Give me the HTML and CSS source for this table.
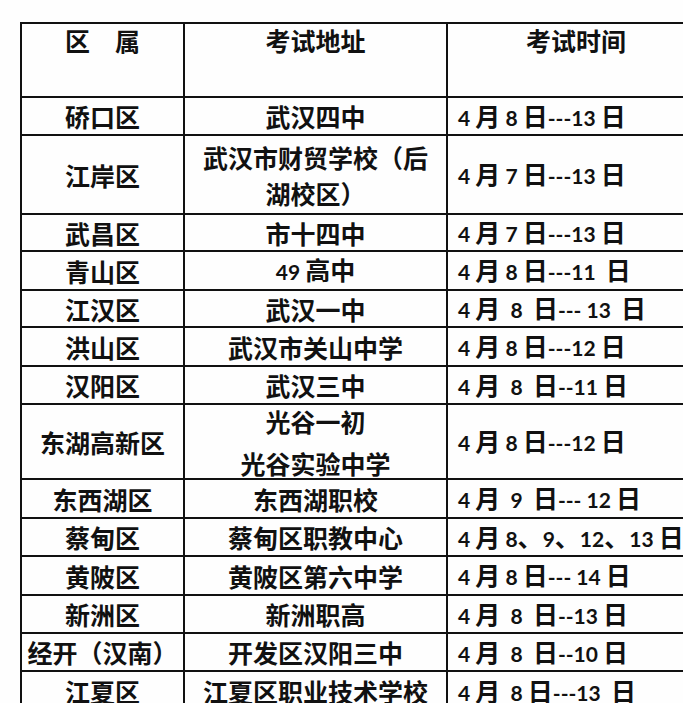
FILE: index.html
```html
<!DOCTYPE html>
<html lang="zh">
<head>
<meta charset="utf-8">
<link rel="stylesheet" href="styles.css">
</head>
<body>
<table class="sched">
  <colgroup><col class="c1"><col class="c2"><col class="c3"></colgroup>
  <tr class="head r74">
    <th>区　属</th>
    <th>考试地址</th>
    <th>考试时间</th>
  </tr>
  <tr class="r38"><td>硚口区</td><td>武汉四中</td><td class="dt">4 <i>月</i> 8 <i>日</i>---13 <i>日</i></td></tr>
  <tr class="r79"><td>江岸区</td><td class="two">武汉市财贸学校（后<br>湖校区）</td><td class="dt">4 <i>月</i> 7 <i>日</i>---13 <i>日</i></td></tr>
  <tr class="r37"><td>武昌区</td><td>市十四中</td><td class="dt">4 <i>月</i> 7 <i>日</i>---13 <i>日</i></td></tr>
  <tr class="r39"><td>青山区</td><td><span class="num">49 </span>高中</td><td class="dt">4 <i>月</i> 8 <i>日</i>---11  <i>日</i></td></tr>
  <tr class="r37"><td>江汉区</td><td>武汉一中</td><td class="dt">4 <i>月</i>  8  <i>日</i>--- 13  <i>日</i></td></tr>
  <tr class="r39"><td>洪山区</td><td>武汉市关山中学</td><td class="dt">4 <i>月</i> 8 <i>日</i>---12 <i>日</i></td></tr>
  <tr class="r38"><td>汉阳区</td><td>武汉三中</td><td class="dt">4 <i>月</i>  8  <i>日</i>--11 <i>日</i></td></tr>
  <tr class="r75"><td>东湖高新区</td><td><span class="pair"><span>光谷一初</span><span>光谷实验中学</span></span></td><td class="dt">4 <i>月</i> 8 <i>日</i>---12 <i>日</i></td></tr>
  <tr class="r39"><td>东西湖区</td><td>东西湖职校</td><td class="dt">4 <i>月</i>  9  <i>日</i>--- 12 <i>日</i></td></tr>
  <tr class="r38"><td>蔡甸区</td><td>蔡甸区职教中心</td><td class="dt">4 <i>月</i> 8<i>、</i>9<i>、</i>12<i>、</i>13 <i>日</i></td></tr>
  <tr class="r39"><td>黄陂区</td><td>黄陂区第六中学</td><td class="dt">4 <i>月</i> 8 <i>日</i>--- 14 <i>日</i></td></tr>
  <tr class="r38"><td>新洲区</td><td>新洲职高</td><td class="dt">4 <i>月</i>  8  <i>日</i>--13 <i>日</i></td></tr>
  <tr class="r38"><td>经开（汉南）</td><td>开发区汉阳三中</td><td class="dt">4 <i>月</i>  8  <i>日</i>--10 <i>日</i></td></tr>
  <tr class="r40"><td>江夏区</td><td>江夏区职业技术学校</td><td class="dt">4 <i>月</i>  8 <i>日</i>---13  <i>日</i></td></tr>
</table>
</body>
</html>
```

FILE: styles.css
```css
html, body {
  margin: 0;
  padding: 0;
  background: #fefefe;
  overflow: hidden;
  width: 683px;
  height: 703px;
}

.sched {
  margin: 22px 0 0 20px;
  border-collapse: collapse;
  table-layout: fixed;
  width: 684px;
  font-family: "Noto Sans CJK SC", "Noto Sans", sans-serif;
  font-weight: 700;
  font-size: 25px;
  color: #111;
}

.c1 { width: 163px; }
.c2 { width: 263px; }
.c3 { width: 258px; }

.sched th,
.sched td {
  border: 2px solid #111;
  padding: 0;
  text-align: center;
  vertical-align: middle;
  line-height: 30px;
  white-space: nowrap;
}

.sched th {
  vertical-align: top;
  padding-top: 1px;
  font-weight: 700;
}

.num {
  font-family: Lato, "Noto Sans CJK SC", sans-serif;
  font-size: 21px;
}

.sched td.dt {
  text-align: left;
  padding-left: 10px;
  white-space: pre;
  font-family: Lato, "Noto Sans CJK SC", sans-serif;
  font-size: 21px;
}

.dt i {
  font-style: normal;
  font-family: "Noto Sans CJK SC", sans-serif;
  font-size: 25px;
}

.sched td.two { line-height: 36px; }

.pair {
  display: flex;
  flex-direction: column;
  align-items: center;
  gap: 12px;
}

.r74 { height: 74px; }
.r75 { height: 75px; }
.r38 { height: 38px; }
.r79 { height: 79px; }
.r37 { height: 37px; }
.r39 { height: 39px; }
.r40 { height: 40px; }
```
